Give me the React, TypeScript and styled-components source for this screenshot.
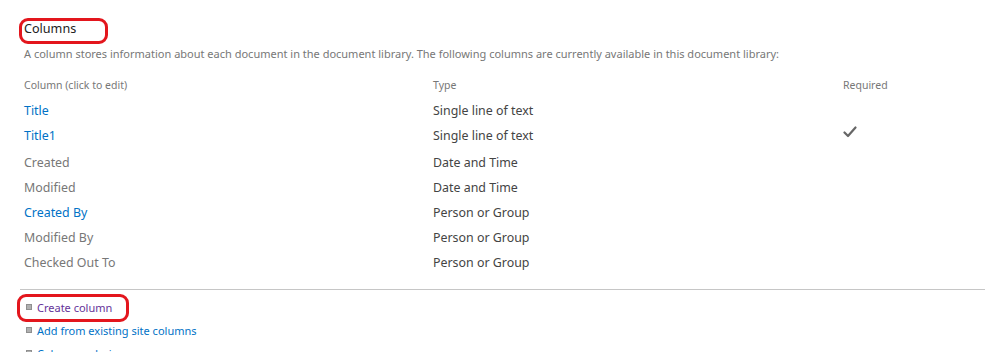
import React from "react";
import styled, { createGlobalStyle } from "styled-components";

const LINK = "#0072c6";
const VISITED = "#663399";
const MUTED = "#777777";
const BODY = "#444444";
const FONT = `"Noto Sans", "Open Sans", Arial, sans-serif`;

const GlobalStyle = createGlobalStyle`
  html, body {
    margin: 0;
    padding: 0;
    background: #ffffff;
    overflow: hidden;
  }
  body {
    font-family: ${FONT};
  }
`;

const Page = styled.div`
  width: 985px;
  height: 352px;
  overflow: hidden;
  padding: 16px 0 0 20px;
  box-sizing: border-box;
`;

const Heading = styled.h2`
  margin: 0 0 0 4px;
  font-size: 12.6px;
  font-weight: 400;
  color: #222;
  line-height: 18px;
  position: relative;
  display: inline-block;
`;

// red annotation drawn over the screenshot
const Marker = styled.span<{ $w: number; $h: number; $l: number; $t: number }>`
  position: absolute;
  left: ${(p) => p.$l}px;
  top: ${(p) => p.$t}px;
  width: ${(p) => p.$w}px;
  height: ${(p) => p.$h}px;
  border: 3.5px solid #e3161d;
  border-radius: 9px;
  box-sizing: border-box;
  pointer-events: none;
`;

const Description = styled.p`
  margin: 9px 0 0 4px;
  font-size: 11px;
  color: ${MUTED};
  line-height: 14px;
`;

const Grid = styled.div`
  display: grid;
  grid-template-columns: 409px 410px 1fr;
  margin: 16px 0 0 4px;
`;

const HeadCell = styled.div`
  font-size: 10.5px;
  color: ${MUTED};
  height: 25px;
  line-height: 16px;
`;

const Cell = styled.div<{ $tall?: boolean; $tone?: "link" | "muted" | "body" }>`
  font-size: 12.4px;
  height: ${(p) => (p.$tall ? 27 : 25)}px;
  line-height: 18px;
  color: ${(p) =>
    p.$tone === "link" ? LINK : p.$tone === "muted" ? MUTED : BODY};
  display: flex;
  align-items: flex-start;
`;

const Rule = styled.hr`
  border: none;
  border-top: 1px solid #c6c6c6;
  margin: 10px 0 0 0;
`;

const Links = styled.ul`
  list-style: none;
  margin: 6px 0 0 0;
  padding: 0;
`;

const LinkItem = styled.li`
  display: flex;
  align-items: center;
  height: 23px;
  position: relative;
`;

const Bullet = styled.span`
  width: 4px;
  height: 4px;
  background: #b0b0b0;
  border: 1px solid #8f8f8f;
  margin: 0 5px 2px 6px;
`;

const Anchor = styled.a<{ $visited?: boolean }>`
  font-size: 11px;
  color: ${(p) => (p.$visited ? VISITED : LINK)};
  text-decoration: none;
`;

const Check = () => (
  <svg width="14" height="12" viewBox="0 0 14 12" style={{ marginTop: -1 }}>
    <path
      d="M1.5 6.5 L5 10 L12.5 1.5"
      fill="none"
      stroke="#666"
      strokeWidth="2.2"
      strokeLinecap="round"
      strokeLinejoin="round"
    />
  </svg>
);

type Row = {
  name: string;
  type: string;
  editable: boolean;
  required?: boolean;
};

const rows: Row[] = [
  { name: "Title", type: "Single line of text", editable: true },
  { name: "Title1", type: "Single line of text", editable: true, required: true },
  { name: "Created", type: "Date and Time", editable: false },
  { name: "Modified", type: "Date and Time", editable: false },
  { name: "Created By", type: "Person or Group", editable: true },
  { name: "Modified By", type: "Person or Group", editable: false },
  { name: "Checked Out To", type: "Person or Group", editable: false },
];

export default function App() {
  return (
    <>
      <GlobalStyle />
      <Page>
        <Heading>
          Columns
          <Marker $l={-5} $t={-2} $w={89} $h={26} />
        </Heading>
        <Description>
          A column stores information about each document in the document
          library. The following columns are currently available in this
          document library:
        </Description>
        <Grid>
          <HeadCell>Column (click to edit)</HeadCell>
          <HeadCell>Type</HeadCell>
          <HeadCell>Required</HeadCell>
          {rows.map((r) => (
            <React.Fragment key={r.name}>
              <Cell $tall={r.required} $tone={r.editable ? "link" : "muted"}>
                {r.name}
              </Cell>
              <Cell $tall={r.required}>{r.type}</Cell>
              <Cell $tall={r.required}>{r.required ? <Check /> : null}</Cell>
            </React.Fragment>
          ))}
        </Grid>
        <Rule />
        <Links>
          <LinkItem>
            <Bullet />
            <Anchor href="#" $visited>
              Create column
            </Anchor>
            <Marker $l={-3} $t={-2} $w={112} $h={28} />
          </LinkItem>
          <LinkItem>
            <Bullet />
            <Anchor href="#">Add from existing site columns</Anchor>
          </LinkItem>
          <LinkItem>
            <Bullet />
            <Anchor href="#">Column ordering</Anchor>
          </LinkItem>
        </Links>
      </Page>
    </>
  );
}
